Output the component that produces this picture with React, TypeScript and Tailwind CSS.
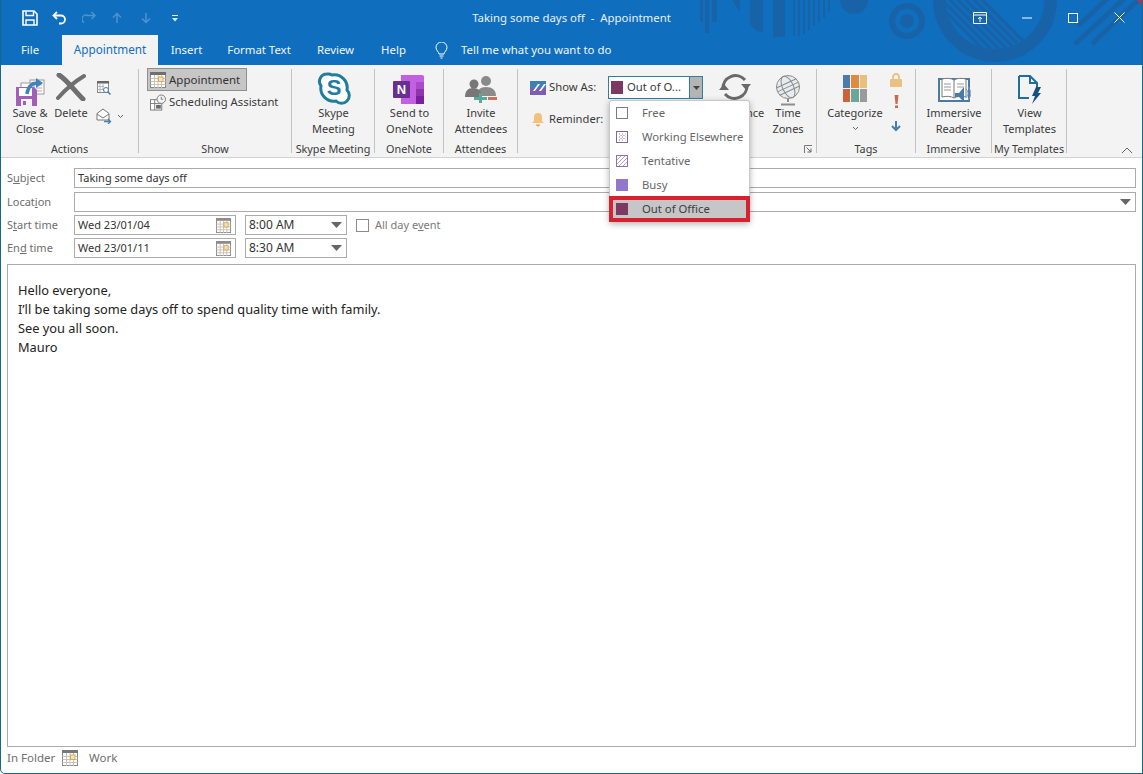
import React from "react";

const Cal = ({ s = 16, c = "#6f6f6f" }: { s?: number; c?: string }) => (
  <svg width={s} height={s} viewBox="0 0 16 16" className="shrink-0">
    <rect x="0.5" y="0.5" width="15" height="15" fill="#fff" stroke="#8a8a8a" />
    <rect x="0" y="0" width="16" height="3" fill={c} />
    <path d="M0.5 6.5H15.5M0.5 9.5H15.5M0.5 12.5H15.5M4.5 3V16M8 3V16M11.5 3V16" stroke="#c9c2b8" strokeWidth="1" />
    <rect x="8.5" y="5" width="4.5" height="4.5" fill="#f4e3b5" stroke="#d9aa5c" />
  </svg>
);

const BigBtn = ({ w, icon, l1, l2, chev }: { w: string; icon: React.ReactNode; l1: string; l2?: string; chev?: boolean }) => (
  <div className={`${w} shrink-0 flex flex-col items-center`}>
    <div className="h-[37px] w-full flex items-end justify-center">{icon}</div>
    <div className="-mt-px text-[11px] leading-[16px] text-[#3a3a3a] text-center whitespace-nowrap">{l1}</div>
    {l2 && <div className="text-[11px] leading-[16px] text-[#3a3a3a] text-center whitespace-nowrap">{l2}</div>}
    {chev && (
      <svg width="7" height="5" viewBox="0 0 7 5" className="mt-[5px]"><path d="M1 1l2.5 2.5L6 1" fill="none" stroke="#666" /></svg>
    )}
  </div>
);

const Group = ({ w, label, children, launcher }: { w: string; label?: string; children: React.ReactNode; launcher?: boolean }) => (
  <div className={`${w} shrink-0 h-[84px] border-r border-[#c2c2c2] relative`}>
    <div className="h-[72px] flex">{children}</div>
    {label && <div className="h-[12px] text-[10.8px] leading-[16px] text-[#3a3a3a] text-center whitespace-nowrap">{label}</div>}
    {launcher && (
      <svg width="8" height="8" viewBox="0 0 8 8" className="absolute right-[4px] bottom-[0px]">
        <path d="M0.5 8V0.5H8" fill="none" stroke="#777" />
        <path d="M2.5 2.5L7 7M7 3.5V7H3.5" fill="none" stroke="#666" />
      </svg>
    )}
  </div>
);

const Deco = () => (
  <svg width="443" height="65" viewBox="700 0 443 65" className="absolute right-0 top-0 pointer-events-none">
    <defs>
      <clipPath id="inner"><circle cx="995" cy="0" r="49" /></clipPath>
    </defs>
    <g fill="#1863a8">
      <rect x="700" y="0" width="3" height="22" />
      <rect x="705" y="0" width="4" height="33" />
      <rect x="712" y="0" width="5" height="22" />
      <path d="M732 0h8l0 12z" />
      <path d="M750 0h13v33l-8-3-5-6z" />
      <rect x="773" y="0" width="12" height="37" />
      <rect x="793" y="0" width="2" height="36" />
      <rect x="798" y="0" width="2" height="36" />
      <rect x="803" y="0" width="2" height="34" />
      <rect x="808" y="0" width="2" height="30" />
      <rect x="813" y="0" width="2" height="26" />
      <rect x="818" y="0" width="2" height="22" />
      <rect x="823" y="0" width="2" height="18" />
      <rect x="828" y="0" width="2" height="12" />
      <path d="M840 0h28a14 14 0 0 1-28 0z" />
      <circle cx="907" cy="21" r="7" />
    </g>
    <circle cx="907" cy="21" r="15" fill="none" stroke="#1863a8" strokeWidth="6" />
    <circle cx="995" cy="0" r="55.5" fill="none" stroke="#1863a8" strokeWidth="13" />
    <g clipPath="url(#inner)" stroke="#1863a8" strokeWidth="3.5">
      <path d="M950 0L1002 52M958 0L1010 52M966 0L1018 52M974 0L1022 48M982 0L1028 46M942 0L994 52M934 0L986 52" />
    </g>
    <g stroke="#1863a8" strokeWidth="5">
      <path d="M1125 -2L1075 44M1140 -2L1092 44M1108 -2L1078 26" />
    </g>
    <path d="M1137 0h6v7z" fill="#a33a5a" />
  </svg>
);

const items = [
  { t: "Free", sw: <rect x="0.5" y="0.5" width="11" height="11" fill="#fff" stroke="#7a7a8a" /> },
  {
    t: "Working Elsewhere",
    sw: (
      <g>
        <rect x="0.5" y="0.5" width="11" height="11" fill="#fff" stroke="#7a6a9a" />
        <path d="M3 3h1M6 3h1M9 3h.5M3 6h1M6 6h1M9 6h.5M3 9h1M6 9h1M9 9h.5M4.5 4.5h1M7.5 4.5h1M4.5 7.5h1M7.5 7.5h1" stroke="#8a7aa8" />
      </g>
    ),
  },
  {
    t: "Tentative",
    sw: (
      <g>
        <rect x="0.5" y="0.5" width="11" height="11" fill="#fff" stroke="#8a70b8" />
        <path d="M1 5L5 1M1 9L9 1M3 11L11 3M7 11L11 7" stroke="#b39cd8" />
      </g>
    ),
  },
  { t: "Busy", sw: <rect x="0" y="0" width="12" height="12" fill="#9278cc" /> },
];

const Swatch = ({ children }: { children: React.ReactNode }) => (
  <svg width="12" height="12" viewBox="0 0 12 12" className="shrink-0">{children}</svg>
);

const Arrow = () => (
  <svg width="11" height="6" viewBox="0 0 11 6"><path d="M0 0h11L5.5 6z" fill="#666" /></svg>
);

const Label = ({ children }: { children: React.ReactNode }) => (
  <div className="w-[67px] shrink-0 text-[11px] text-[#6e6e6e]">{children}</div>
);

const Box = ({ w, children }: { w: string; children?: React.ReactNode }) => (
  <div className={`${w} h-[20px] border border-[#ababab] bg-white flex items-center pl-[3px] pr-[3px] text-[11px] text-[#333] whitespace-nowrap`}>{children}</div>
);

export default function App() {
  return (
    <div className="w-[1143px] h-[774px] flex flex-col overflow-hidden bg-white border-x border-b border-[#14688c] rounded-bl-[5px] relative font-['Noto_Sans',sans-serif] text-[11.5px]">
      {/* title + tabs */}
      <div className="h-[65px] bg-[#106ebe] relative text-white shrink-0 -mx-px">
        <Deco />
        <div className="relative grid grid-cols-[1fr_auto_1fr] h-[35px] items-center">
          <div className="flex items-center">
            <svg width="16" height="16" viewBox="0 0 16 16" className="ml-[22px]">
              <path d="M1 1h11l3 3v11H1z" fill="none" stroke="#fff" strokeWidth="1.6" />
              <path d="M4 1.5v4h7.5v-4M4 15v-5h8v5" fill="none" stroke="#fff" strokeWidth="1.4" />
            </svg>
            <svg width="15" height="14" viewBox="0 0 15 14" className="ml-[14px]">
              <path d="M5 1L1.5 4.5 5 8" fill="none" stroke="#fff" strokeWidth="1.8" />
              <path d="M2 4.5h7a4 4 0 0 1 0 8H7" fill="none" stroke="#fff" strokeWidth="1.8" />
            </svg>
            <svg width="14" height="13" viewBox="0 0 14 13" className="ml-[15px]">
              <path d="M9.5 1L13 4.5 9.5 8" fill="none" stroke="#4f93cf" strokeWidth="1.5" />
              <path d="M12.5 4.5H6a4 4 0 0 0-4 7" fill="none" stroke="#4f93cf" strokeWidth="1.5" />
            </svg>
            <svg width="12" height="12" viewBox="0 0 12 12" className="ml-[15px]">
              <path d="M6 11V2M2 5.5L6 1.5l4 4" fill="none" stroke="#4f93cf" strokeWidth="1.5" />
            </svg>
            <svg width="12" height="12" viewBox="0 0 12 12" className="ml-[17px]">
              <path d="M6 1v9M2 6.5l4 4 4-4" fill="none" stroke="#4f93cf" strokeWidth="1.5" />
            </svg>
            <svg width="8" height="8" viewBox="0 0 8 8" className="ml-[19px]">
              <path d="M1 1.5h6" stroke="#dfeaf5" /><path d="M1 4h6L4 7.5z" fill="#dfeaf5" />
            </svg>
          </div>
          <div className="text-[11.4px] text-[#e9f1f9] whitespace-pre">Taking some days off  -  Appointment</div>
          <div className="flex items-center justify-end">
            <svg width="14" height="12" viewBox="0 0 14 12" className="mr-[35px]">
              <path d="M.5.5h13v11H.5zM.5 3h13" fill="none" stroke="#fff" />
              <path d="M7 10V5M5 7l2-2 2 2" fill="none" stroke="#fff" />
            </svg>
            <svg width="10" height="10" viewBox="0 0 10 10" className="mr-[36px]"><path d="M0 5h10" stroke="#fff" /></svg>
            <svg width="10" height="10" viewBox="0 0 10 10" className="mr-[36px]"><rect x=".5" y=".5" width="9" height="9" fill="none" stroke="#fff" /></svg>
            <svg width="11" height="11" viewBox="0 0 11 11" className="mr-[18px]"><path d="M.5.5l10 10M10.500.5l-10 10" stroke="#fff" /></svg>
          </div>
        </div>
        <div className="relative h-[30px] flex items-center text-[11.4px] text-[#f1f6fb]">
          <div className="w-[62px] pr-[2px] text-center">File</div>
          <div className="w-[96px] h-full bg-[#f3f3f3] text-[#106ebe] text-[11.7px] flex items-center justify-center">Appointment</div>
          <div className="w-[57px] text-center">Insert</div>
          <div className="w-[88px] text-center">Format Text</div>
          <div className="w-[65px] text-center">Review</div>
          <div className="w-[51px] text-center">Help</div>
          <svg width="13" height="17" viewBox="0 0 13 17" className="ml-[16px]">
            <path d="M4 12c0-2-3-3.5-3-6.5a5.5 5.5 0 0 1 11 0C12 8.5 9 10 9 12z" fill="none" stroke="#fff" />
            <path d="M4.500 14h4M5.500 16h2" stroke="#fff" />
          </svg>
          <div className="ml-[13px] whitespace-nowrap">Tell me what you want to do</div>
        </div>
      </div>

      {/* ribbon */}
      <div className="h-[93px] shrink-0 bg-[#f3f3f3] border-b border-[#d2d2d2] pt-[4px] flex">
        <Group w="w-[138px]" label="Actions">
          <div className="flex pl-[6px]">
            <BigBtn
              w="w-[46px]"
              l1="Save &"
              l2="Close"
              icon={
                <svg width="29" height="29" viewBox="0 0 29 29">
                  <rect x="14" y="3" width="14" height="14" fill="#fff" stroke="#9a9a9a" />
                  <path d="M20 8h6M20 11h6M20 14h6" stroke="#aaa" />
                  <rect x="5" y="6" width="13" height="10" fill="#fff" stroke="#9a9a9a" />
                  <path d="M0 10h18l3 3v16H0z" fill="#a15fb7" />
                  <rect x="3" y="11" width="13" height="8" fill="#fff" />
                  <rect x="5" y="22" width="11" height="7" fill="#f3f3f3" />
                  <rect x="7" y="24" width="3" height="4" fill="#a15fb7" />
                  <path d="M11 17c1-8 5-11 11-11" fill="none" stroke="#3f83b8" strokeWidth="3.5" />
                  <path d="M20 1l7 5-7 5z" fill="#3f83b8" />
                </svg>
              }
            />
            <BigBtn
              w="w-[36px]"
              l1="Delete"
              icon={
                <svg width="30" height="28" viewBox="0 0 30 28" className="mb-[5px]">
                  <path d="M3 2C10 6 18 17 27 26" fill="none" stroke="#6f6f6f" strokeWidth="5" strokeLinecap="round" />
                  <path d="M28 3C18 9 9 17 2 25" fill="none" stroke="#6f6f6f" strokeWidth="4" strokeLinecap="round" />
                </svg>
              }
            />
            <div className="flex flex-col pl-[8px] pt-[12px]">
              <svg width="14" height="14" viewBox="0 0 14 14">
                <rect x=".5" y=".5" width="11" height="11" fill="#fff" stroke="#888" />
                <rect x="0" y="0" width="12" height="2.5" fill="#666" />
                <path d="M3 3v8M6 3v5M.5 5.5H7M.5 8.5H6" stroke="#b5b5b5" />
                <circle cx="9" cy="9" r="2.5" fill="#fff" stroke="#4a7ba6" />
                <path d="M11 11l2.500 2.500" stroke="#4a7ba6" strokeWidth="1.5" />
              </svg>
              <div className="flex items-center mt-[13px]">
                <svg width="16" height="16" viewBox="0 0 16 16" className="-ml-px">
                  <path d="M1 5.5L7 1l6 4.5V12H1z" fill="#fff" stroke="#777" />
                  <path d="M1 6l6 4 6-4" fill="none" stroke="#777" />
                  <path d="M8 13.5h6M12 11l2.500 2.500L12 16" fill="none" stroke="#3f83b8" strokeWidth="1.3" />
                </svg>
                <svg width="7" height="5" viewBox="0 0 7 5" className="ml-[5px]"><path d="M1 1l2.500 2.500L6 1" fill="none" stroke="#666" /></svg>
              </div>
            </div>
          </div>
        </Group>

        <Group w="w-[153px]" label="Show">
          <div className="flex flex-col pl-[8px]">
            <div className="w-[100px] h-[23px] -mt-px bg-[#c6c6c6] border border-[#8f8f8f] flex items-center pl-[2px] gap-[3px] text-[11.5px] text-[#333]">
              <Cal s={16} />
              Appointment
            </div>
            <div className="h-[23px] flex items-center pl-[3px] gap-[3px] text-[11.3px] text-[#3a3a3a] whitespace-nowrap">
              <svg width="16" height="17" viewBox="0 0 17 17" className="shrink-0">
                <rect x=".5" y="5.5" width="12" height="11" fill="#fff" stroke="#777" />
                <path d="M.5 9.5h12M5 5.5v11" stroke="#777" />
                <rect x="6.5" y="11" width="5" height="4" fill="#6a6a6a" />
                <circle cx="12" cy="5" r="4.5" fill="#f3f3f3" stroke="#777" />
                <path d="M12 2.5V5h2" fill="none" stroke="#777" />
              </svg>
              Scheduling Assistant
            </div>
          </div>
        </Group>

        <Group w="w-[83px]" label="Skype Meeting">
          <BigBtn
            w="w-[83px]"
            l1="Skype"
            l2="Meeting"
            icon={
              <svg width="34" height="34" viewBox="0 0 34 34" className="mb-[1px]">
                <path d="M10 3a7 7 0 0 1 5 1 13 13 0 0 1 15 15 7.5 7.5 0 0 1-11 11A13 13 0 0 1 4 15 7.5 7.5 0 0 1 10 3z" fill="#fff" stroke="#1f7d9e" strokeWidth="3" />
                <text x="17" y="24" textAnchor="middle" fontSize="22" fontWeight="700" fill="#1f7d9e" fontFamily="Liberation Sans">S</text>
              </svg>
            }
          />
        </Group>

        <Group w="w-[69px]" label="OneNote">
          <BigBtn
            w="w-[69px]"
            l1="Send to"
            l2="OneNote"
            icon={
              <svg width="33" height="29" viewBox="0 0 33 29" className="mb-[2px]">
                <path d="M8 0h21a2 2 0 0 1 2 2v25a2 2 0 0 1-2 2H8z" fill="#c160e0" />
                <rect x="23" y="7" width="8" height="7" fill="#a94bc9" />
                <rect x="23" y="14" width="8" height="7" fill="#8e35ad" />
                <rect x="23" y="21" width="8" height="8" fill="#7a1f9e" />
                <rect x="0" y="6" width="17" height="17" rx="1" fill="#6a2d92" />
                <text x="8.5" y="19" textAnchor="middle" fontSize="13" fontWeight="700" fill="#fff" fontFamily="Liberation Sans">N</text>
              </svg>
            }
          />
        </Group>

        <Group w="w-[74px]" label="Attendees">
          <BigBtn
            w="w-[74px]"
            l1="Invite"
            l2="Attendees"
            icon={
              <svg width="32" height="28" viewBox="0 0 32 28" className="mb-[3px]">
                <circle cx="21" cy="6" r="5" fill="#8a8a8a" />
                <path d="M12 21c0-6 3-9 9-9s10 3 10 9z" fill="#8a8a8a" />
                <circle cx="9" cy="9" r="4.5" fill="#777" />
                <path d="M0 22c0-6 3-9 8-9s9 3 9 9z" fill="#777" />
                <path d="M12 22h5v-4h3v4h5v3h-5v3h-3v-3h-5z" fill="#5aa897" transform="translate(-3 0)" />
                <rect x="23" y="22" width="9" height="3" fill="#d0705a" />
              </svg>
            }
          />
        </Group>

        <Group w="w-[299px]" launcher>
          <div className="flex">
            <div className="w-[187px] pl-[12px] pt-[7px] flex flex-col">
              <div className="h-[23px] flex items-center text-[11.3px] text-[#3a3a3a]">
                <svg width="16" height="16" viewBox="0 0 16 16" className="shrink-0">
                  <rect y="1" width="16" height="14" fill="#7c5cb5" />
                  <rect y="1" width="16" height="7" fill="#3f7fb5" />
                  <path d="M3 11L8 4h2l-5 7zM9 11l5-7h2l-5 7z" fill="#fff" />
                </svg>
                <span className="ml-[3px] w-[59px]">Show As:</span>
                <div className="w-[95px] h-[23px] border border-[#2f7fa5] bg-white flex items-center relative shrink-0">
                  <div className="w-[12px] h-[13px] bg-[#7c3a63] ml-[2px] shrink-0" />
                  <span className="ml-[4px] whitespace-nowrap">Out of O...</span>
                  <div className="absolute right-0 top-0 bottom-0 w-[13px] bg-[#b4b4b4] border-l border-[#2f7fa5] flex items-center justify-center">
                    <svg width="7" height="4" viewBox="0 0 7 4"><path d="M0 0h7L3.5 4z" fill="#444" /></svg>
                  </div>
                </div>
              </div>
              <div className="h-[12px]" />
              <div className="h-[16px] flex items-center text-[11.2px] text-[#3a3a3a]">
                <svg width="14" height="15" viewBox="0 0 14 15" className="shrink-0 ml-[1px]">
                  <path d="M7 1a4 4 0 0 1 4 4v4l2 2H1l2-2V5a4 4 0 0 1 4-4z" fill="#f2c27a" />
                  <path d="M5 12.5h4a2 2 0 0 1-4 0z" fill="#e0a24e" />
                </svg>
                <span className="ml-[4px] whitespace-nowrap">Reminder:</span>
              </div>
            </div>
            <BigBtn
              w="w-[60px]"
              l1="Recurrence"
              icon={
                <svg width="32" height="28" viewBox="0 0 32 28" className="mb-[5px]">
                  <path d="M4 16A12.5 12.5 0 0 1 26 7" fill="none" stroke="#6a6a6a" strokeWidth="3" />
                  <path d="M28 12A12.5 12.5 0 0 1 6 21" fill="none" stroke="#6a6a6a" strokeWidth="3" />
                  <path d="M22 11h10l-5 6zM0 17h10l-5-6z" fill="#6a6a6a" />
                </svg>
              }
            />
            <BigBtn
              w="w-[46px]"
              l1="Time"
              l2="Zones"
              icon={
                <svg width="26" height="32" viewBox="0 0 26 32">
                  <circle cx="13" cy="13" r="11.5" fill="#e6ecef" stroke="#8c8c8c" />
                  <g fill="none" stroke="#8c8c8c" transform="rotate(-25 13 13)">
                    <ellipse cx="13" cy="13" rx="5.5" ry="11.5" />
                    <path d="M2 9h22M2 17h22M1.5 13h23" />
                  </g>
                  <path d="M13 25v3" stroke="#8c8c8c" strokeWidth="2" />
                  <path d="M6 30.5h14" stroke="#8c8c8c" strokeWidth="2" />
                </svg>
              }
            />
          </div>
        </Group>

        <Group w="w-[99px]" label="Tags">
          <div className="flex">
            <BigBtn
              w="w-[76px]"
              l1="Categorize"
              chev
              icon={
                <div className="grid grid-cols-3 gap-[1px] w-[24px] mb-[4px]">
                  <div className="h-[13px] bg-[#4d7cab]" />
                  <div className="h-[13px] bg-[#e08a3e]" />
                  <div className="h-[13px] bg-[#e6c07c]" />
                  <div className="h-[13px] bg-[#cc6237]" />
                  <div className="h-[13px] bg-[#6aa79b]" />
                  <div className="h-[13px] bg-[#9a9a9a]" />
                </div>
              }
            />
            <div className="flex flex-col items-center w-[12px] -ml-[3px] pt-[4px] gap-[8px]">
              <svg width="12" height="14" viewBox="0 0 12 14" className="shrink-0"><path d="M3 6V4a3 3 0 0 1 6 0v2" fill="none" stroke="#e8c27e" strokeWidth="1.8" /><rect y="6" width="12" height="8" rx="1" fill="#e8c27e" /></svg>
              <svg width="5" height="13" viewBox="0 0 5 13" className="shrink-0"><path d="M.5 0h4L3.5 9h-2z" fill="#c96a4f" /><rect x="1" y="10.5" width="3" height="2.5" fill="#c96a4f" /></svg>
              <svg width="10" height="12" viewBox="0 0 10 12" className="mt-[4px] shrink-0"><path d="M5 1v9M1 6l4 4 4-4" fill="none" stroke="#3f7fb5" strokeWidth="2" /></svg>
            </div>
          </div>
        </Group>

        <Group w="w-[76px]" label="Immersive">
          <BigBtn
            w="w-[76px]"
            l1="Immersive"
            l2="Reader"
            icon={
              <svg width="33" height="27" viewBox="0 0 33 27" className="mb-[3px]">
                <path d="M1 3h30v22H1z" fill="#fff" stroke="#4a7ba6" strokeWidth="2" />
                <path d="M16 4c-3-2-8-2-12-1v18c4-1 9-1 12 1 3-2 8-2 12-1V3c-4-1-9-1-12 1zM16 4v18" fill="#fff" stroke="#777" />
                <path d="M6 8h7M6 11h7M6 14h7M19 8h7M19 11h7" stroke="#999" />
                <path d="M17 17h4l5-6v15l-5-5h-4z" fill="#4a7ba6" />
                <path d="M28 13a6 6 0 0 1 0 9M30 11a9 9 0 0 1 0 13" fill="none" stroke="#7fa5c6" />
              </svg>
            }
          />
        </Group>

        <Group w="w-[75px]" label="My Templates">
          <BigBtn
            w="w-[75px]"
            l1="View"
            l2="Templates"
            icon={
              <svg width="24" height="30" viewBox="0 0 24 30" className="mb-[1px]">
                <path d="M1 1h11l7 7v6M1 1v22h10" fill="none" stroke="#1f6e9e" strokeWidth="2" />
                <path d="M12 1v7h7" fill="none" stroke="#1f6e9e" strokeWidth="2" />
                <path d="M18 12h5l-3 6h3l-9 11 3-8h-3z" fill="#17507a" />
              </svg>
            }
          />
        </Group>

        <svg width="12" height="7" viewBox="0 0 12 7" className="ml-auto mr-[9px] self-end mb-[3px]">
          <path d="M1 6l5-5 5 5" fill="none" stroke="#666" />
        </svg>
      </div>

      {/* form */}
      <div className="flex-1 flex flex-col pl-[6px] pr-[6px] pt-[10px] min-h-0">
        <div className="flex items-center">
          <Label>S<u>u</u>bject</Label>
          <div className="flex-1"><Box w="w-full">Taking some days off</Box></div>
        </div>
        <div className="flex items-center mt-[4px]">
          <Label>Locat<u>i</u>on</Label>
          <div className="flex-1"><Box w="w-full"><div className="ml-auto mr-[1px]"><Arrow /></div></Box></div>
        </div>
        <div className="flex items-center mt-[3px]">
          <Label>S<u>t</u>art time</Label>
          <Box w="w-[162px]"><span className="flex-1">Wed 23/01/04</span><div className="mr-[1px]"><Cal s={15} c="#8c8c8c" /></div></Box>
          <div className="ml-[9px]"><Box w="w-[102px]"><span className="flex-1 text-[12px]">8:00 AM</span><div className="mr-[1px]"><Arrow /></div></Box></div>
          <div className="w-[13px] h-[13px] border border-[#8a8a8a] bg-white ml-[9px]" />
          <span className="ml-[6px] text-[11px] text-[#7a7a7a]">All day e<u>v</u>ent</span>
        </div>
        <div className="flex items-center mt-[3px]">
          <Label>En<u>d</u> time</Label>
          <Box w="w-[162px]"><span className="flex-1">Wed 23/01/11</span><div className="mr-[1px]"><Cal s={15} c="#8c8c8c" /></div></Box>
          <div className="ml-[9px]"><Box w="w-[102px]"><span className="flex-1 text-[12px]">8:30 AM</span><div className="mr-[1px]"><Arrow /></div></Box></div>
        </div>
        <div className="flex-1 mt-[6px] border border-[#ababab] px-[10px] pt-[16px] text-[12.8px] leading-[19px] text-[#222] min-h-0">
          <div>Hello everyone,</div>
          <div>I’ll be taking some days off to spend quality time with family.</div>
          <div>See you all soon.</div>
          <div>Mauro</div>
        </div>
        <div className="h-[26px] shrink-0 pb-[4px] flex items-center text-[#6e6e6e]">
          <span className="w-[55px]">In Folder</span>
          <Cal s={16} c="#777" />
          <span className="ml-[11px]">Work</span>
        </div>
      </div>

      {/* dropdown */}
      <div className="absolute left-[608px] top-[100px] w-[141px] h-[122px] bg-white border border-[#c8c8c8] rounded-[3px] shadow-[0_2px_6px_rgba(0,0,0,0.3)] text-[11.3px] text-[#666]">
        <div className="h-[95px] flex flex-col">
          {items.map((it) => (
            <div key={it.t} className="h-[24px] shrink-0 flex items-center pl-[6px] whitespace-nowrap">
              <Swatch>{it.sw}</Swatch>
              <span className="ml-[14px]">{it.t}</span>
            </div>
          ))}
        </div>
        <div className="h-[26px] -mx-px -mb-px relative border-[4px] border-[#d9202e] bg-[#c6c6c6] flex items-center pl-[3px] text-[#3e3e3e]">
          <div className="w-[12px] h-[12px] bg-[#7c3a63] shrink-0" />
          <span className="ml-[14px] whitespace-nowrap">Out of Office</span>
        </div>
      </div>
    </div>
  );
}
